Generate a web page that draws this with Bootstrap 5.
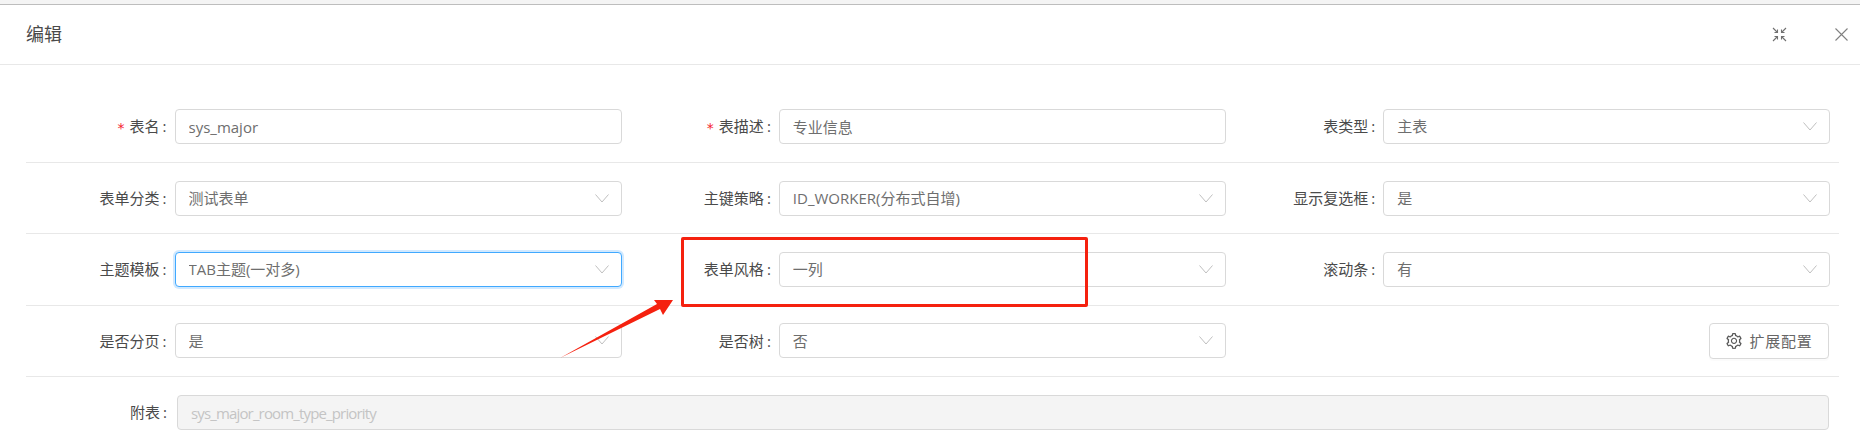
<!DOCTYPE html>
<html lang="zh">
<head>
<meta charset="utf-8">
<title>编辑</title>
<link href="https://cdn.jsdelivr.net/npm/bootstrap@5.3.0/dist/css/bootstrap.min.css" rel="stylesheet">
<style>
html,body{margin:0;background:#fff;}
body{font-family:"Open Sans","Noto Sans CJK SC",sans-serif;font-size:15px;color:#333;width:1860px;height:436px;overflow:hidden;position:relative;}
.topstrip{height:5px;background:#f4f4f4;border-bottom:1px solid #bdbdbd;}
.dlg-head{height:60px;border-bottom:1px solid #e8e8e8;padding:0 12px 0 26px;}
.dlg-title{font-size:18px;color:#4a4a4a;}
.dlg-tool{line-height:0;}
.tool-gap{gap:48px;}
.form-wrap{margin:26px 21px 0 26px;}
.frow{height:71.4px;border-bottom:1px solid #e8e8e8;margin:0;}
.frow.first{height:72px;}
.frow.plain{border-bottom:0;height:71px;}
.fcell{width:604.33px;display:flex;align-items:center;}
.flabel{width:148.5px;padding-right:8px;text-align:right;color:#4a4a4a;white-space:nowrap;flex:none;}
.cln{margin-left:3px;}
.req{color:#f5222d;margin-right:5px;font-family:"DejaVu Sans",sans-serif;font-size:14px;vertical-align:-1px;}
.fctl.form-control,.fctl.form-select{width:447px;height:35px;flex:none;font-size:15px;padding:0 30px 0 13px;border:1px solid #d9d9d9;border-radius:4px;color:#6e6e6e;font-family:inherit;box-shadow:none;}
.fctl.form-select{background-image:url("data:image/svg+xml,%3Csvg xmlns='http://www.w3.org/2000/svg' viewBox='0 0 14 9'%3E%3Cpath d='M.5.5 7 8 13.5.5' fill='none' stroke='%23bfbfbf' stroke-width='1'/%3E%3C/svg%3E");background-position:right 12px center;background-size:14px 9px;appearance:none;}
.fctl.is-focus{border-color:#40a9ff;box-shadow:0 0 0 2px rgba(24,144,255,.2);}
.fctl.wide.form-control{width:1652px;background:#f4f4f4;color:#c4c4c4;opacity:1;letter-spacing:-.85px;}
.flabel.wide{width:151px;padding-right:10px;}
.ext-btn.btn{width:120px;height:36px;font-size:15px;letter-spacing:.7px;color:#666;background:#fff;border:1px solid #d9d9d9;border-radius:4px;padding:0;box-shadow:0 2px 0 rgba(0,0,0,.015);gap:8px;margin-left:auto;margin-right:10px;}
.anno-box{position:absolute;left:681px;top:237px;width:407px;height:70px;border:3px solid #f5210f;border-radius:2px;pointer-events:none;}
.anno-arrow{position:absolute;left:0;top:0;pointer-events:none;}
</style>
</head>
<body>
<div class="topstrip"></div>
<div class="dlg-head d-flex align-items-center justify-content-between">
  <div class="dlg-title">编辑</div>
  <div class="d-flex align-items-center tool-gap">
    <span class="dlg-tool"><svg width="15" height="15" viewBox="0 0 15 15" fill="none" stroke="#707070" stroke-width="1.1"><path d="M1 1 5.5 5.5M5.5 2.5V5.5H2.5M14 1 9.5 5.5M9.5 2.5V5.5h3M1 14l4.5-4.5M5.5 12.500V9.500H2.500M14 14 9.500 9.500M9.500 12.500V9.500h3"/></svg></span>
    <span class="dlg-tool"><svg width="13" height="13" viewBox="0 0 13 13" fill="none" stroke="#808080" stroke-width="1.1"><path d="M.5.5l12 12M12.500.5l-12 12"/></svg></span>
  </div>
</div>
<div class="form-wrap">
  <div class="d-flex frow first">
    <div class="fcell"><label class="flabel"><span class="req">*</span>表名<span class="cln">:</span></label><input class="form-control fctl" value="sys_major"></div>
    <div class="fcell"><label class="flabel"><span class="req">*</span>表描述<span class="cln">:</span></label><input class="form-control fctl" value="专业信息"></div>
    <div class="fcell"><label class="flabel">表类型<span class="cln">:</span></label><select class="form-select fctl"><option>主表</option></select></div>
  </div>
  <div class="d-flex frow">
    <div class="fcell"><label class="flabel">表单分类<span class="cln">:</span></label><select class="form-select fctl"><option>测试表单</option></select></div>
    <div class="fcell"><label class="flabel">主键策略<span class="cln">:</span></label><select class="form-select fctl"><option>ID_WORKER(分布式自增)</option></select></div>
    <div class="fcell"><label class="flabel">显示复选框<span class="cln">:</span></label><select class="form-select fctl"><option>是</option></select></div>
  </div>
  <div class="d-flex frow">
    <div class="fcell"><label class="flabel">主题模板<span class="cln">:</span></label><select class="form-select fctl is-focus"><option>TAB主题(一对多)</option></select></div>
    <div class="fcell"><label class="flabel">表单风格<span class="cln">:</span></label><select class="form-select fctl"><option>一列</option></select></div>
    <div class="fcell"><label class="flabel">滚动条<span class="cln">:</span></label><select class="form-select fctl"><option>有</option></select></div>
  </div>
  <div class="d-flex frow">
    <div class="fcell"><label class="flabel">是否分页<span class="cln">:</span></label><select class="form-select fctl"><option>是</option></select></div>
    <div class="fcell"><label class="flabel">是否树<span class="cln">:</span></label><select class="form-select fctl"><option>否</option></select></div>
    <div class="fcell"><button type="button" class="btn ext-btn d-flex align-items-center justify-content-center"><svg width="16" height="16" viewBox="64 64 896 896" fill="#595959"><path d="M924.8 625.7l-65.5-56c3.1-19 4.7-38.4 4.7-57.8s-1.6-38.8-4.7-57.8l65.5-56a32.03 32.03 0 0 0 9.3-35.2l-.9-2.6a443.74 443.74 0 0 0-79.7-137.9l-1.8-2.1a32.12 32.12 0 0 0-35.1-9.5l-81.3 28.9c-30-24.6-63.5-44-99.7-57.6l-15.7-85a32.05 32.05 0 0 0-25.8-25.7l-2.7-.5c-52.1-9.4-106.9-9.4-159 0l-2.7.5a32.05 32.05 0 0 0-25.8 25.7l-15.8 85.4a351.86 351.86 0 0 0-99 57.4l-81.9-29.1a32 32 0 0 0-35.1 9.5l-1.8 2.1a446.02 446.02 0 0 0-79.7 137.9l-.9 2.6c-4.5 12.5-.8 26.5 9.3 35.2l66.3 56.6c-3.1 18.8-4.6 38-4.6 57.1 0 19.2 1.5 38.4 4.6 57.1L99 625.5a32.03 32.03 0 0 0-9.3 35.2l.9 2.6c18.1 50.4 44.9 96.9 79.7 137.9l1.8 2.1a32.12 32.12 0 0 0 35.1 9.5l81.9-29.1c29.8 24.5 63.1 43.9 99 57.4l15.8 85.4a32.05 32.05 0 0 0 25.8 25.7l2.7.5a449.4 449.4 0 0 0 159 0l2.7-.5a32.05 32.05 0 0 0 25.8-25.7l15.7-85a350 350 0 0 0 99.7-57.6l81.3 28.9a32 32 0 0 0 35.1-9.5l1.8-2.1c34.8-41.1 61.6-87.5 79.7-137.9l.9-2.6c4.5-12.3.8-26.3-9.3-35zM788.3 465.9c2.5 15.1 3.8 30.6 3.8 46.1s-1.3 31-3.8 46.1l-6.6 40.1 74.7 63.9a370.03 370.03 0 0 1-42.6 73.6L721 702.8l-31.4 25.8c-23.9 19.6-50.5 35-79.3 45.8l-38.1 14.3-17.9 97a377.5 377.5 0 0 1-85 0l-17.9-97.2-37.8-14.5c-28.5-10.8-55-26.2-78.7-45.7l-31.4-25.9-93.4 33.2c-17-22.9-31.2-47.6-42.6-73.6l75.5-64.5-6.5-40c-2.4-14.9-3.7-30.3-3.7-45.5 0-15.3 1.2-30.6 3.7-45.5l6.5-40-75.5-64.5c11.3-26.1 25.6-50.7 42.6-73.6l93.4 33.2 31.4-25.9c23.7-19.5 50.2-34.9 78.7-45.7l37.9-14.3 17.9-97.2c28.1-3.2 56.8-3.2 85 0l17.9 97 38.1 14.3c28.7 10.8 55.4 26.2 79.3 45.8l31.4 25.8 92.8-32.9c17 22.9 31.2 47.6 42.6 73.6L781.8 426l6.5 39.9zM512 326c-97.2 0-176 78.8-176 176s78.8 176 176 176 176-78.8 176-176-78.8-176-176-176zm79.2 255.2A111.6 111.6 0 0 1 512 614c-29.9 0-58-11.7-79.2-32.8A111.6 111.6 0 0 1 400 502c0-29.9 11.7-58 32.8-79.2C454 401.6 482.1 390 512 390c29.9 0 58 11.6 79.2 32.8A111.6 111.6 0 0 1 624 502c0 29.9-11.7 58-32.8 79.2z"/></svg><span>扩展配置</span></button></div>
  </div>
  <div class="d-flex frow plain">
    <div class="d-flex align-items-center"><label class="flabel wide">附表<span class="cln">:</span></label><input class="form-control fctl wide" value="sys_major_room_type_priority" disabled></div>
  </div>
</div>
<div class="anno-box"></div>
<svg class="anno-arrow" width="1860" height="436"><polygon points="560,358 657,304 654,300 673,300 663,315 660,309" fill="#f5210f"/></svg>
</body>
</html>
